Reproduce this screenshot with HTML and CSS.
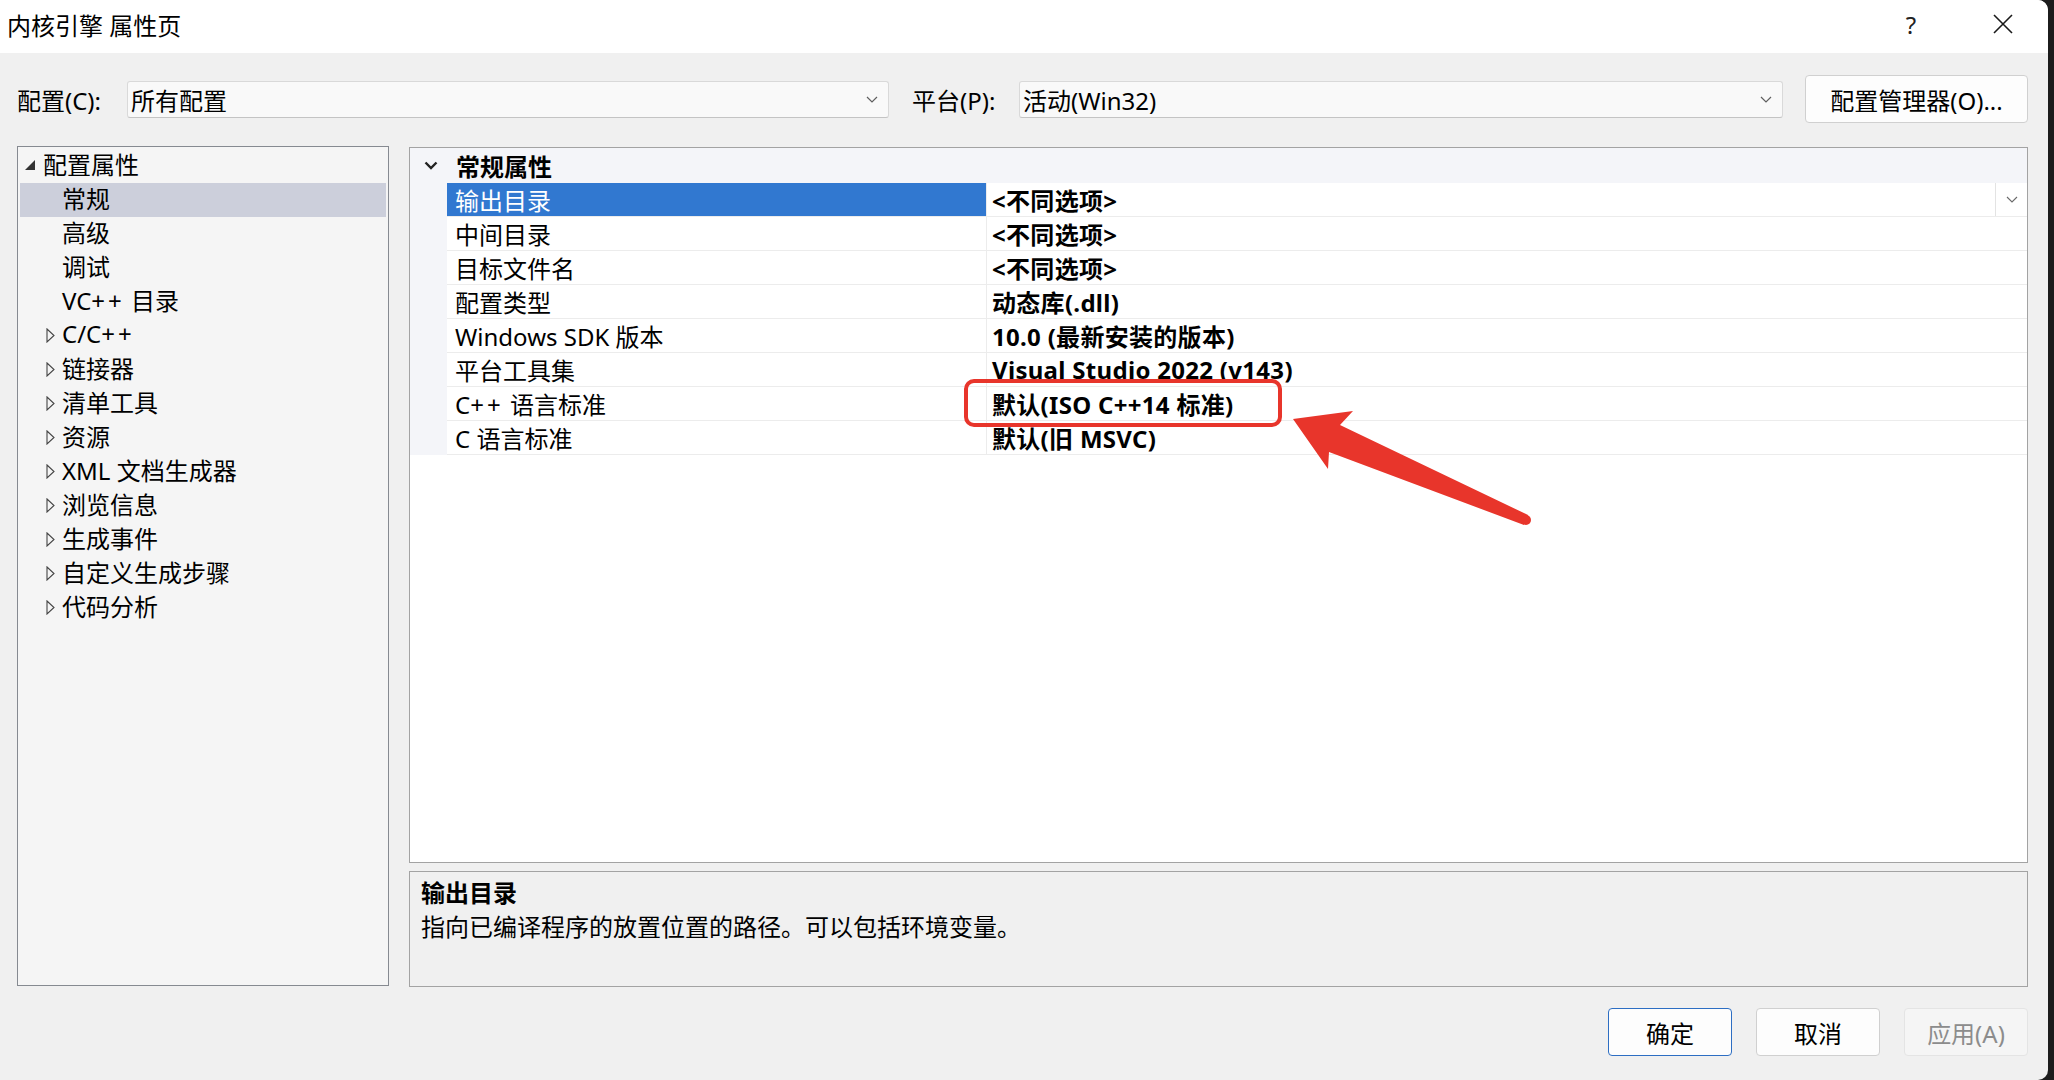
FILE: index.html
```html
<!DOCTYPE html>
<html lang="zh-CN">
<head>
    <meta charset="UTF-8">
    <title>内核引擎 属性页</title>
    <link rel="stylesheet" href="styles.css">
</head>
<body>
    <div class="window">
        <div class="titlebar">
            <span class="title">内核引擎 属性页</span>
            <span class="help">?</span>
            <svg class="close" width="20" height="20" viewBox="0 0 20 20">
                <path d="M1 1 L19 19 M19 1 L1 19" stroke="#1a1a1a" stroke-width="1.6" fill="none"/>
            </svg>
        </div>

        <div class="content">
            <div class="config-row">
                <span class="config-label">配置(C):</span>
                <div class="combo combo-config">
                    <span class="combo-text">所有配置</span>
                    <svg class="chev" width="12" height="7" viewBox="0 0 12 7"><polyline points="1,1 6,6 11,1" stroke="#5f5f5f" stroke-width="1.2" fill="none"/></svg>
                </div>
                <span class="config-label platform-label">平台(P):</span>
                <div class="combo combo-platform">
                    <span class="combo-text">活动(Win32)</span>
                    <svg class="chev" width="12" height="7" viewBox="0 0 12 7"><polyline points="1,1 6,6 11,1" stroke="#5f5f5f" stroke-width="1.2" fill="none"/></svg>
                </div>
                <button class="btn btn-manager">配置管理器(O)...</button>
            </div>

            <div class="main">
                <div class="tree">
                    <div class="tree-row tree-root">
                        <svg class="tri-open" width="10" height="10" viewBox="0 0 10 10"><polygon points="10,0 10,10 0,10" fill="#333"/></svg>
                        <span>配置属性</span>
                    </div>
                    <div class="tree-row tree-leaf selected"><span>常规</span></div>
                    <div class="tree-row tree-leaf"><span>高级</span></div>
                    <div class="tree-row tree-leaf"><span>调试</span></div>
                    <div class="tree-row tree-leaf"><span>VC<span class="plus">++</span> 目录</span></div>
                    <div class="tree-row tree-node"><svg class="tri-closed" width="9" height="15" viewBox="0 0 9 15"><polygon points="1,1 8,7.5 1,14" stroke="#444" stroke-width="1.1" fill="none"/></svg><span>C/C<span class="plus">++</span></span></div>
                    <div class="tree-row tree-node"><svg class="tri-closed" width="9" height="15" viewBox="0 0 9 15"><polygon points="1,1 8,7.5 1,14" stroke="#444" stroke-width="1.1" fill="none"/></svg><span>链接器</span></div>
                    <div class="tree-row tree-node"><svg class="tri-closed" width="9" height="15" viewBox="0 0 9 15"><polygon points="1,1 8,7.5 1,14" stroke="#444" stroke-width="1.1" fill="none"/></svg><span>清单工具</span></div>
                    <div class="tree-row tree-node"><svg class="tri-closed" width="9" height="15" viewBox="0 0 9 15"><polygon points="1,1 8,7.5 1,14" stroke="#444" stroke-width="1.1" fill="none"/></svg><span>资源</span></div>
                    <div class="tree-row tree-node"><svg class="tri-closed" width="9" height="15" viewBox="0 0 9 15"><polygon points="1,1 8,7.5 1,14" stroke="#444" stroke-width="1.1" fill="none"/></svg><span>XML 文档生成器</span></div>
                    <div class="tree-row tree-node"><svg class="tri-closed" width="9" height="15" viewBox="0 0 9 15"><polygon points="1,1 8,7.5 1,14" stroke="#444" stroke-width="1.1" fill="none"/></svg><span>浏览信息</span></div>
                    <div class="tree-row tree-node"><svg class="tri-closed" width="9" height="15" viewBox="0 0 9 15"><polygon points="1,1 8,7.5 1,14" stroke="#444" stroke-width="1.1" fill="none"/></svg><span>生成事件</span></div>
                    <div class="tree-row tree-node"><svg class="tri-closed" width="9" height="15" viewBox="0 0 9 15"><polygon points="1,1 8,7.5 1,14" stroke="#444" stroke-width="1.1" fill="none"/></svg><span>自定义生成步骤</span></div>
                    <div class="tree-row tree-node"><svg class="tri-closed" width="9" height="15" viewBox="0 0 9 15"><polygon points="1,1 8,7.5 1,14" stroke="#444" stroke-width="1.1" fill="none"/></svg><span>代码分析</span></div>
                </div>

                <div class="right">
                    <div class="grid">
                        <div class="grid-body">
                            <div class="category">
                                <svg class="cat-chev" width="14" height="9" viewBox="0 0 14 9"><polyline points="1.5,1.5 7,7 12.5,1.5" stroke="#222" stroke-width="2.4" fill="none"/></svg>
                                <span>常规属性</span>
                            </div>
                            <div class="prop-row">
                                <div class="prop-name selected">输出目录</div>
                                <div class="prop-value">&lt;不同选项&gt;</div>
                                <div class="prop-drop">
                                    <svg width="12" height="7" viewBox="0 0 12 7"><polyline points="1,1 6,6 11,1" stroke="#6a6a6a" stroke-width="1.1" fill="none"/></svg>
                                </div>
                            </div>
                            <div class="prop-row">
                                <div class="prop-name">中间目录</div>
                                <div class="prop-value">&lt;不同选项&gt;</div>
                            </div>
                            <div class="prop-row">
                                <div class="prop-name">目标文件名</div>
                                <div class="prop-value">&lt;不同选项&gt;</div>
                            </div>
                            <div class="prop-row">
                                <div class="prop-name">配置类型</div>
                                <div class="prop-value">动态库(.dll)</div>
                            </div>
                            <div class="prop-row">
                                <div class="prop-name">Windows SDK 版本</div>
                                <div class="prop-value">10.0 (最新安装的版本)</div>
                            </div>
                            <div class="prop-row">
                                <div class="prop-name">平台工具集</div>
                                <div class="prop-value">Visual Studio 2022 (v143)</div>
                            </div>
                            <div class="prop-row">
                                <div class="prop-name"><span>C<span class="plus">++</span> 语言标准</span></div>
                                <div class="prop-value">默认(ISO C++14 标准)</div>
                            </div>
                            <div class="prop-row">
                                <div class="prop-name">C 语言标准</div>
                                <div class="prop-value">默认(旧 MSVC)</div>
                            </div>
                        </div>
                    </div>
                    <div class="desc">
                        <div class="desc-title">输出目录</div>
                        <div class="desc-text">指向已编译程序的放置位置的路径。可以包括环境变量。</div>
                    </div>
                </div>
            </div>

            <div class="footer">
                <button class="btn btn-default">确定</button>
                <button class="btn">取消</button>
                <button class="btn btn-disabled">应用(A)</button>
            </div>
        </div>

        <!-- screenshot markup: box + arrow -->
        <svg class="markup" width="2054" height="1080" viewBox="0 0 2054 1080">
            <rect x="966" y="381" width="314" height="44" rx="8" ry="8" fill="none" stroke="#e8352b" stroke-width="4"/>
            <polygon points="1293,419 1353,411 1340,425 1528,515 1524,525 1329,452 1328,469" fill="#e8352b"/>
            <circle cx="1526" cy="520" r="5" fill="#e8352b"/>
        </svg>
    </div>
</body>
</html>
```

FILE: styles.css
```css
body {
    margin: 0;
    background-color: #1c1c1c;
    font-family: "Noto Sans", "Noto Sans CJK SC", sans-serif;
    font-size: 24px;
    color: #000;
    overflow: hidden;
}
.window {
    position: relative;
    width: 2048px;
    height: 1080px;
    background-color: #f0f0f0;
    border-radius: 0 10px 10px 0;
    overflow: hidden;
    display: flex;
    flex-direction: column;
}
.titlebar {
    height: 53px;
    flex-shrink: 0;
    background-color: #fff;
    display: flex;
    align-items: center;
    padding-left: 7px;
}
.title {
    flex: 1;
    margin-top: -5px;
}
.help {
    width: 40px;
    text-align: center;
    color: #222;
    margin-top: -4px;
}
.close {
    margin-left: 62px;
    margin-right: 35px;
    margin-top: -6px;
}
.content {
    flex: 1;
    display: flex;
    flex-direction: column;
    padding: 0 20px 0 17px;
}
.config-row {
    display: flex;
    align-items: center;
    height: 48px;
    margin-top: 22px;
}
.config-label {
    width: 110px;
    flex-shrink: 0;
}
.platform-label {
    width: 107px;
    margin-left: 23px;
}
.combo {
    box-sizing: border-box;
    height: 37px;
    display: flex;
    align-items: center;
    padding: 0 10px 0 3px;
    background-color: #f9f9f9;
    border: 1px solid #d9d9d9;
    border-bottom-color: #c4c4c4;
    border-radius: 3px;
}
.combo-config {
    width: 762px;
}
.combo-platform {
    width: 764px;
}
.combo-text {
    flex: 1;
}
.btn {
    box-sizing: border-box;
    width: 124px;
    height: 48px;
    font-family: inherit;
    font-size: 24px;
    color: #000;
    background-color: #fdfdfd;
    border: 1px solid #d0d0d0;
    border-radius: 4px;
    padding: 0;
}
.btn-manager {
    width: 223px;
    margin-left: 22px;
}
.btn-default {
    border-color: #2d6ec3;
}
.btn-disabled {
    color: #8c8c8c;
    background-color: #f5f5f5;
    border-color: #e4e4e4;
}
.main {
    display: flex;
    gap: 20px;
    margin-top: 23px;
    height: 841px;
}
.tree {
    box-sizing: border-box;
    width: 372px;
    height: 840px;
    padding: 2px;
    background-color: #f5f5f5;
    border: 1px solid #868a91;
}
.tree-row {
    box-sizing: border-box;
    height: 34px;
    padding-bottom: 5px;
    display: flex;
    align-items: center;
    white-space: nowrap;
}
.plus {
    letter-spacing: 3px;
}
.tree-root {
    padding-left: 5px;
}
.tri-open {
    margin-right: 8px;
    margin-top: 2px;
}
.tree-leaf {
    padding-left: 42px;
}
.tree-node {
    padding-left: 26px;
}
.tri-closed {
    margin-right: 7px;
    margin-top: 3px;
}
.tree-row.selected {
    background-color: #cccfdb;
}
.right {
    flex: 1;
    display: flex;
    flex-direction: column;
    gap: 8px;
}
.grid {
    box-sizing: border-box;
    height: 716px;
    margin-top: 1px;
    background-color: #fff;
    border: 1px solid #a3a3a3;
}
.grid-body {
    background-color: #f4f5f9;
}
.category {
    height: 35px;
    display: flex;
    align-items: center;
    padding-left: 14px;
    font-weight: 700;
}
.cat-chev {
    margin-right: 18px;
}
.prop-row {
    box-sizing: border-box;
    height: 34px;
    margin-left: 37px;
    display: flex;
    background-color: #fff;
    border-bottom: 1px solid #ececec;
    white-space: nowrap;
}
.prop-name {
    box-sizing: border-box;
    width: 540px;
    padding-left: 8px;
    display: flex;
    align-items: center;
    border-right: 1px solid #ececec;
}
.prop-name.selected {
    background-color: #3178d0;
    color: #fff;
}
.prop-value {
    flex: 1;
    padding-left: 5px;
    display: flex;
    align-items: center;
    font-weight: 700;
    letter-spacing: 0.3px;
    overflow: hidden;
}
.prop-drop {
    width: 31px;
    display: flex;
    align-items: center;
    justify-content: center;
    border-left: 1px solid #e3e3e3;
}
.desc {
    box-sizing: border-box;
    height: 116px;
    padding: 4px 11px;
    border: 1px solid #a3a3a3;
}
.desc-title {
    line-height: 34px;
    font-weight: 700;
}
.desc-text {
    line-height: 34px;
}
.footer {
    display: flex;
    justify-content: flex-end;
    gap: 24px;
    margin-top: 21px;
}
.markup {
    position: absolute;
    top: 0;
    left: 0;
    pointer-events: none;
}
```
